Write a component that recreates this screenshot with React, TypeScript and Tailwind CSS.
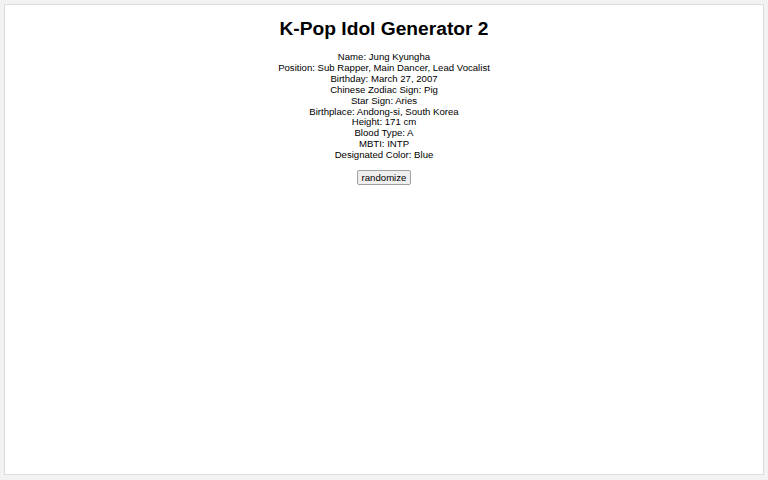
export default function App() {
  const facts = [
    "Name: Jung Kyungha",
    "Position: Sub Rapper, Main Dancer, Lead Vocalist",
    "Birthday: March 27, 2007",
    "Chinese Zodiac Sign: Pig",
    "Star Sign: Aries",
    "Birthplace: Andong-si, South Korea",
    "Height: 171 cm",
    "Blood Type: A",
    "MBTI: INTP",
    "Designated Color: Blue",
  ];
  return (
    <div className="h-[480px] w-[768px] bg-[#f2f2f2] px-[4px] pt-[4px] pb-[5px] font-['Liberation_Sans',Arial,sans-serif] text-black">
      <div className="flex h-full flex-col items-center border border-[#dcdcdc] bg-white">
        <h1 className="mt-[12px] text-[19.2px] font-bold leading-[23px]">K-Pop Idol Generator 2</h1>
        <div className="mt-[12px] flex flex-col items-center text-[9.6px] leading-[10.9px]">
          {facts.map((f) => (
            <div key={f}>{f}</div>
          ))}
        </div>
        <button className="mt-[9px] h-[15px] rounded-[2px] border border-[#a0a0a0] bg-[#efefef] px-[4px] text-[9.6px] leading-[12px]">
          randomize
        </button>
      </div>
    </div>
  );
}
